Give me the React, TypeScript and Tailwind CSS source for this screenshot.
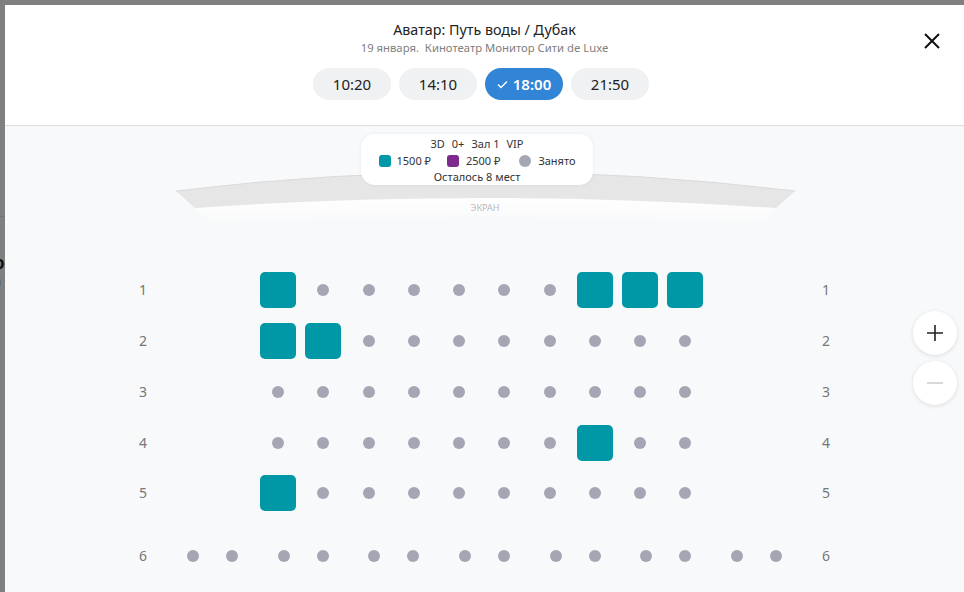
import React from "react";

type S = "s" | "d";

const rows: { n: number; seats: S[] }[] = [
  { n: 1, seats: ["s", "d", "d", "d", "d", "d", "d", "s", "s", "s"] },
  { n: 2, seats: ["s", "s", "d", "d", "d", "d", "d", "d", "d", "d"] },
  { n: 3, seats: ["d", "d", "d", "d", "d", "d", "d", "d", "d", "d"] },
  { n: 4, seats: ["d", "d", "d", "d", "d", "d", "d", "s", "d", "d"] },
  { n: 5, seats: ["s", "d", "d", "d", "d", "d", "d", "d", "d", "d"] },
];

const times = ["10:20", "14:10", "18:00", "21:50"];

function Seat({ t }: { t: S }) {
  return (
    <div className="w-[45.25px] flex items-center justify-center">
      {t === "s" ? (
        <div className="w-[36px] h-[36px] rounded-[5px] bg-[#0098a6]" />
      ) : (
        <div className="w-[12px] h-[12px] rounded-full bg-[#a4a6b4]" />
      )}
    </div>
  );
}

function Label({ n }: { n: number }) {
  return (
    <div className="w-[30px] text-center text-[14px] leading-[20px] text-[#777]">{n}</div>
  );
}

export default function App() {
  return (
    <div
      className="w-[964px] h-[592px] overflow-hidden bg-[#808080] flex"
      style={{ fontFamily: '"Noto Sans", "Open Sans", sans-serif' }}
    >
      {/* page behind overlay, left sliver */}
      <div className="w-[5px] shrink-0 overflow-hidden flex flex-col">
        <div className="h-[216px]" />
        <div className="h-[1px] bg-[#737373]" />
        <div className="mt-[36px] -ml-[6px] text-[17px] leading-[20px] font-bold text-[#111]">о</div>
        <div className="-ml-[7px] text-[13px] leading-[16px] text-[#111]">и</div>
      </div>

      <div className="flex-1 mt-[5px] bg-white flex flex-col">
        {/* header */}
        <div className="relative h-[121px] shrink-0 border-b border-[#dcdcdc] flex flex-col items-center pt-[15px]">
          <div className="text-[14.3px] leading-[20px] text-[#222]">Аватар: Путь воды / Дубак</div>
          <div className="text-[11.3px] leading-[16px] text-[#808080] whitespace-pre">
            19 января.  Кинотеатр Монитор Сити de Luxe
          </div>
          <div className="flex gap-[8px] mt-[12px] pr-[7px]">
            {times.map((t) =>
              t === "18:00" ? (
                <div
                  key={t}
                  className="w-[78px] h-[32px] rounded-full bg-[#3184d6] text-white flex items-center justify-center gap-[5px] text-[15px] font-semibold"
                >
                  <svg width="11" height="9" viewBox="0 0 11 9" fill="none">
                    <path d="M1 4.5 L4 7.5 L10 1.5" stroke="white" strokeWidth="1.4" />
                  </svg>
                  {t}
                </div>
              ) : (
                <div
                  key={t}
                  className="w-[78px] h-[32px] rounded-full bg-[#f0f1f3] text-[#222] flex items-center justify-center text-[15px]"
                >
                  {t}
                </div>
              )
            )}
          </div>
          <div className="absolute right-[24px] top-[28px] w-[16px] h-[16px]">
            <svg width="16" height="16" viewBox="0 0 16 16">
              <path d="M1 1 L15 15 M15 1 L1 15" stroke="#111" strokeWidth="2" />
            </svg>
          </div>
        </div>

        {/* content */}
        <div className="relative flex-1 bg-[#f8f9fa] flex flex-col">
          <div className="relative h-[100px]">
            <svg width="959" height="100" viewBox="5 126 959 100" className="block">
              <defs>
                <linearGradient id="glow" x1="0" y1="0" x2="0" y2="1">
                  <stop offset="0" stopColor="#ffffff" stopOpacity="0.9" />
                  <stop offset="1" stopColor="#ffffff" stopOpacity="0" />
                </linearGradient>
              </defs>
              <path d="M195 208 Q485 188 776 208 L760 226 Q485 208 210 226 Z" fill="url(#glow)" />
              <path d="M176 191 Q485 153 795 191 L776 208 Q485 188 195 208 Z" fill="#e6e6e6" />
              <path d="M176 191 Q485 153 795 191" fill="none" stroke="#dadada" strokeWidth="1" />
              <text x="485" y="211" textAnchor="middle" fontSize="9" fill="#b8b8b8" fontFamily="Noto Sans, sans-serif">
                ЭКРАН
              </text>
            </svg>
            <div className="absolute left-[356px] top-[8px] w-[232px] h-[51px] rounded-[14px] bg-white shadow-[0_0_4px_rgba(0,0,0,0.06)] flex flex-col items-center pt-[2px] text-[11px] leading-[16.5px] text-[#333]">
              <div className="flex gap-[7px]">
                <span>3D</span>
                <span>0+</span>
                <span>Зал 1</span>
                <span>VIP</span>
              </div>
              <div className="flex items-center">
                <div className="w-[12px] h-[12px] rounded-[3px] bg-[#0098a6]" />
                <span className="ml-[6px]">1500 ₽</span>
                <div className="ml-[16px] w-[12px] h-[12px] rounded-[3px] bg-[#7d2a8e]" />
                <span className="ml-[7px]">2500 ₽</span>
                <div className="ml-[19px] w-[12px] h-[12px] rounded-full bg-[#a4a6b4]" />
                <span className="ml-[7px]">Занято</span>
              </div>
              <div>Осталось 8 мест</div>
            </div>
          </div>

          <div className="mt-[39px] flex flex-col">
            {rows.map((r) => (
              <div key={r.n} className="h-[50.75px] flex items-center">
                <div className="ml-[123px]">
                  <Label n={r.n} />
                </div>
                <div className="w-[653px] flex pl-[97.4px]">
                  {r.seats.map((s, i) => (
                    <Seat key={i} t={s} />
                  ))}
                </div>
                <Label n={r.n} />
              </div>
            ))}
            <div className="mt-[12px] h-[50.75px] flex items-center">
              <div className="ml-[123px]">
                <Label n={6} />
              </div>
              <div className="w-[653px] flex pl-[9.15px]">
                {Array.from({ length: 7 }).map((_, i) => (
                  <div key={i} className="w-[90.7px] flex justify-center gap-[27px]">
                    <div className="w-[12px] h-[12px] rounded-full bg-[#a4a6b4]" />
                    <div className="w-[12px] h-[12px] rounded-full bg-[#a4a6b4]" />
                  </div>
                ))}
              </div>
              <Label n={6} />
            </div>
          </div>

          {/* zoom controls */}
          <div className="absolute right-[7px] top-[185px] flex flex-col gap-[6px]">
            <div className="w-[44px] h-[44px] rounded-full bg-white shadow-[0_1px_4px_rgba(0,0,0,0.12)] flex items-center justify-center">
              <svg width="18" height="18" viewBox="0 0 18 18">
                <path d="M9 1 V17 M1 9 H17" stroke="#222" strokeWidth="1.6" />
              </svg>
            </div>
            <div className="w-[44px] h-[44px] rounded-full bg-white shadow-[0_1px_4px_rgba(0,0,0,0.12)] flex items-center justify-center">
              <svg width="18" height="18" viewBox="0 0 18 18">
                <path d="M1 9 H17" stroke="#cfcfcf" strokeWidth="1.6" />
              </svg>
            </div>
          </div>
        </div>
      </div>
    </div>
  );
}
